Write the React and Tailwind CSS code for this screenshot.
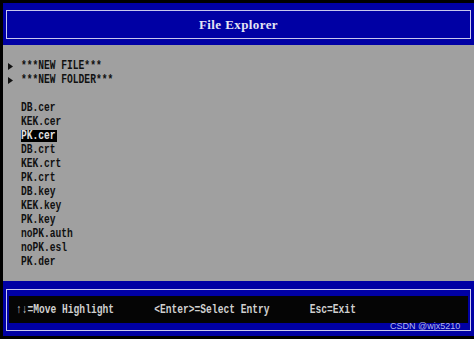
import React from "react";

const mono = "font-['Liberation_Mono',monospace] text-[12px] leading-[12px] origin-left scale-x-[0.8] whitespace-pre font-bold";

const files = [
  "DB.cer",
  "KEK.cer",
  "PK.cer",
  "DB.crt",
  "KEK.crt",
  "PK.crt",
  "DB.key",
  "KEK.key",
  "PK.key",
  "noPK.auth",
  "noPK.esl",
  "PK.der",
];

function Arrow() {
  return (
    <svg width="5" height="7" viewBox="0 0 5 7" className="shrink-0">
      <polygon points="0,0 5,3.5 0,7" fill="#111" />
    </svg>
  );
}

export default function App() {
  return (
    <div className="w-[474px] h-[339px] bg-black pt-[3px] pl-[3px] pb-[3px] flex flex-col overflow-hidden">
      {/* Header */}
      <div className="h-[42px] bg-[#0000a4] px-[3px] pt-[7px] shrink-0">
        <div className="h-[29px] border border-[#c8c8ee] flex items-center justify-center">
          <span className="font-['Liberation_Serif',serif] font-bold text-[13px] text-[#e4e4f4] tracking-[0.4px]">
            File Explorer
          </span>
        </div>
      </div>

      {/* Body */}
      <div className="h-[236px] bg-[#a0a0a0] pt-[14px] shrink-0 text-[#101010]">
        <div className="h-[14px] flex items-center pl-[5px] gap-[8px]">
          <Arrow />
          <div className={mono}>***NEW FILE***</div>
        </div>
        <div className="h-[14px] flex items-center pl-[5px] gap-[8px]">
          <Arrow />
          <div className={mono}>***NEW FOLDER***</div>
        </div>
        <div className="h-[14px]" />
        {files.map((f) => (
          <div key={f} className="h-[14px] flex items-center pl-[18px]">
            {f === "PK.cer" ? (
              <div className={mono}>
                <span className="inline-block bg-black text-[#e0e0e0] leading-[12px] h-[12px] pr-[2px]">{f}</span>
              </div>
            ) : (
              <div className={mono}>{f}</div>
            )}
          </div>
        ))}
      </div>

      {/* Footer */}
      <div className="h-[55px] bg-[#0000a4] px-[3px] pt-[8px] shrink-0 relative">
        <div className="h-[42px] border border-[#c8c8ee] px-[2px] pt-[6px] pb-[6px]">
          <div className="h-[27px] bg-[#050505] flex items-center pl-[7px] text-[#cfcfcf]">
            <div className={mono}>{"↑↓=Move Highlight       <Enter>=Select Entry       Esc=Exit"}</div>
          </div>
        </div>
        <div className="absolute left-[387px] top-[41px] font-['Liberation_Sans',sans-serif] text-[9px] leading-[9px] text-[#b4b8ec]">
          CSDN @wjx5210
        </div>
      </div>
    </div>
  );
}
